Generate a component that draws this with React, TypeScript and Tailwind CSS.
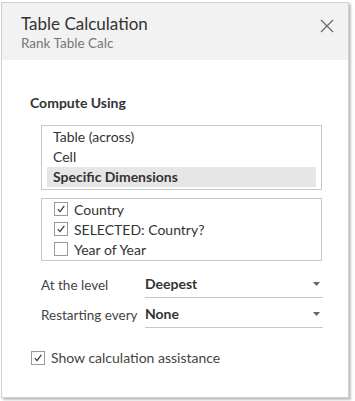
import React from "react";

const Check = ({ checked }: { checked: boolean }) => (
  <span className="w-[14px] h-[14px] border border-[#9a9a9a] bg-white flex items-center justify-center shrink-0">
    {checked && (
      <svg width="10" height="10" viewBox="0 0 10 10">
        <path d="M1.8 5.2 L4 7.6 L8.3 1.8" fill="none" stroke="#333" strokeWidth="1.2" />
      </svg>
    )}
  </span>
);

const Arrow = () => (
  <svg width="7" height="4" viewBox="0 0 7 4" className="mr-[3px]">
    <path d="M0 0 L7 0 L3.5 4 Z" fill="#666" />
  </svg>
);

export default function App() {
  return (
    <div className="w-[355px] h-[401px] bg-white pl-[1px] pt-[2px]" style={{ fontFamily: "Lato, 'Liberation Sans', sans-serif" }}>
      <div className="w-[348px] h-[396px] border border-[#cfcfcf] shadow-[2px_2px_2px_rgba(0,0,0,0.25)] bg-white flex flex-col">
        <div className="bg-[#f2f2f2] h-[57px] flex justify-between pl-[19px] pr-[14px] pt-[10px]">
          <div className="flex flex-col">
            <span className="text-[17px] leading-[22px] text-[#333]">Table Calculation</span>
            <span className="text-[13.5px] leading-[16px] text-[#777]">Rank Table Calc</span>
          </div>
          <svg width="14" height="14" viewBox="0 0 14 14" className="mt-[6px]">
            <path d="M1 1 L13 13 M13 1 L1 13" stroke="#666" strokeWidth="1.2" />
          </svg>
        </div>
        <div className="pl-[28px] pt-[35px] text-[14px] text-[#333]">
          <div className="font-bold leading-[16px]">Compute Using</div>
          <div className="ml-[11px] mt-[14px] w-[281px] border border-[#c8c8c8] pt-[1px] pb-[2px] px-[5px]">
            <div className="leading-[20px] pl-[6px]">Table (across)</div>
            <div className="leading-[20px] pl-[6px]">Cell</div>
            <div className="leading-[20px] pl-[6px] bg-[#e6e6e6] font-bold">Specific Dimensions</div>
          </div>
          <div className="ml-[11px] mt-[8px] w-[281px] border border-[#c8c8c8] pt-[0px] pb-[1px] pl-[12px]">
            <div className="flex items-center gap-[6px] h-[20px]"><Check checked /><span>Country</span></div>
            <div className="flex items-center gap-[6px] h-[20px]"><Check checked /><span>SELECTED: Country?</span></div>
            <div className="flex items-center gap-[6px] h-[20px]"><Check checked={false} /><span>Year of Year</span></div>
          </div>
          <div className="ml-[11px] mt-[15px] flex items-end">
            <span className="w-[104px] text-[13.5px] text-[#444] pb-[5px] leading-[16px]">At the level</span>
            <div className="w-[178px] border-b border-[#c8c8c8] flex items-center justify-between pb-[5px]">
              <span className="font-bold leading-[16px]">Deepest</span>
              <Arrow />
            </div>
          </div>
          <div className="ml-[11px] mt-[8px] flex items-end">
            <span className="w-[104px] text-[13.5px] text-[#444] pb-[5px] leading-[16px]">Restarting every</span>
            <div className="w-[178px] border-b border-[#c8c8c8] flex items-center justify-between pb-[5px]">
              <span className="font-bold leading-[16px]">None</span>
              <Arrow />
            </div>
          </div>
          <div className="mt-[19px] ml-[1px] flex items-center gap-[6px]">
            <Check checked />
            <span className="text-[#444]">Show calculation assistance</span>
          </div>
        </div>
      </div>
    </div>
  );
}
